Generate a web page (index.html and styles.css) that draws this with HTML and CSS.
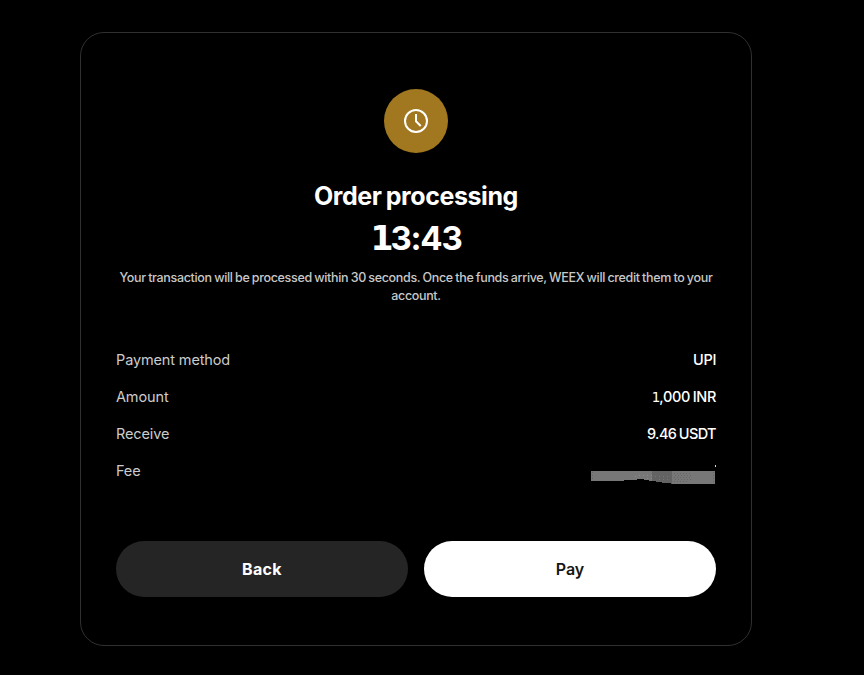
FILE: index.html
```html
<!DOCTYPE html>
<html lang="en">
<head>
<meta charset="utf-8">
<title>Order processing</title>
<link rel="stylesheet" href="styles.css">
</head>
<body>
<main class="card">
  <div class="badge">
    <svg width="28" height="28" viewBox="0 0 28 28" fill="none" stroke="#fff" stroke-width="2">
      <circle cx="14" cy="14" r="11"/>
      <path d="M14 7v7.300l4.700 4.700"/>
    </svg>
  </div>
  <h1 class="title">Order processing</h1>
  <div class="timer"><span class="one">1</span>3:43</div>
  <p class="note">Your transaction will be processed within 30 seconds. Once the funds arrive, WEEX will credit them to your<br>account.</p>
  <dl class="details">
    <div class="row"><dt>Payment method</dt><dd>UPI</dd></div>
    <div class="row"><dt>Amount</dt><dd class="amount"><span class="one">1</span>,000 INR</dd></div>
    <div class="row"><dt>Receive</dt><dd class="receive">9.46 USDT</dd></div>
    <div class="row"><dt>Fee</dt><dd class="redacted">
      <svg width="126" height="20" viewBox="0 0 126 20" shape-rendering="crispEdges">
        <path fill="#777" d="M1 6h124v13H81v-1h-9v-1h-6v-1h-7v-1h-5v-1h-7v1H34v1H1z"/>
        <path fill="#636363" d="M62 6h20v13h-1v-1h-9v-1h-6v-1h-4z"/>
        <path stroke="#656565" stroke-dasharray="1 2" d="M84 8.500h18M85 10.500h18M84 12.500h18M85 14.500h18M84 16.500h15M2.500 7v8M123.500 7v11M64 6.500h18"/>
        <path stroke="#8c8c8c" stroke-dasharray="1 3" d="M49 10.500h14M45 11.500h4M57 13.500h6"/>
        <path stroke="#777" stroke-dasharray="1 3" d="M65 11.500h14M69 14.500h10"/>
        <path fill="#ddd" d="M125 0h1v2h-1z"/>
      </svg>
    </dd></div>
  </dl>
  <div class="actions">
    <button class="button back" type="button">Back</button>
    <button class="button pay" type="button">Pay</button>
  </div>
</main>
</body>
</html>
```

FILE: styles.css
```css
* { box-sizing: border-box; }
body {
  margin: 0;
  padding: 32px 0 0 80px;
  background: #000;
  color: #fff;
  font-family: Inter, "Liberation Sans", sans-serif;
}
.card {
  width: 672px;
  height: 614px;
  padding: 56px 35px 48px;
  border: 1px solid #303030;
  border-radius: 24px;
  display: flex;
  flex-direction: column;
}
.badge {
  width: 64px;
  height: 64px;
  flex: none;
  align-self: center;
  border-radius: 50%;
  background: #a1781f;
  display: grid;
  place-items: center;
}
.title {
  margin: 26px 0 0;
  font-size: 25px;
  line-height: 34px;
  font-weight: 700;
  letter-spacing: -0.42px;
  word-spacing: -1.3px;
  text-align: center;
}
.timer {
  margin-top: 4px;
  font-size: 33px;
  line-height: 42px;
  font-weight: 700;
  letter-spacing: -1.2px;
  text-align: center;
}
.one { font-family: "DejaVu Sans", sans-serif; }
.timer .one { letter-spacing: -3px; }
.note {
  margin: 9px 0 0;
  font-size: 12.5px;
  line-height: 18px;
  font-weight: 500;
  letter-spacing: -0.33px;
  word-spacing: -0.6px;
  color: #c8c8c8;
  text-align: center;
  white-space: nowrap;
}
.details {
  margin: 44px 0 0;
  display: grid;
  gap: 16px;
}
.row {
  height: 21px;
  display: flex;
  justify-content: space-between;
  font-size: 14.5px;
  line-height: 21px;
  letter-spacing: -0.13px;
}
dt { color: #ccc; }
dd {
  margin: 0;
  font-weight: 500;
  letter-spacing: -0.35px;
}
.amount, .receive { word-spacing: -0.8px; }
.receive { letter-spacing: -0.6px; }
.amount .one { font-size: 13.5px; letter-spacing: -1px; }
.redacted { height: 20px; }
.redacted svg { display: block; margin-top: 5px; }
.actions {
  margin-top: auto;
  display: grid;
  grid-template-columns: 1fr 1fr;
  gap: 16px;
}
.button {
  height: 56px;
  padding: 0;
  border: 0;
  border-radius: 28px;
  font: 700 16px/24px Inter, "Liberation Sans", sans-serif;
}
.back { background: #252525; color: #fff; letter-spacing: 0.3px; }
.pay { background: #fff; color: #161616; font-weight: 600; }
```
